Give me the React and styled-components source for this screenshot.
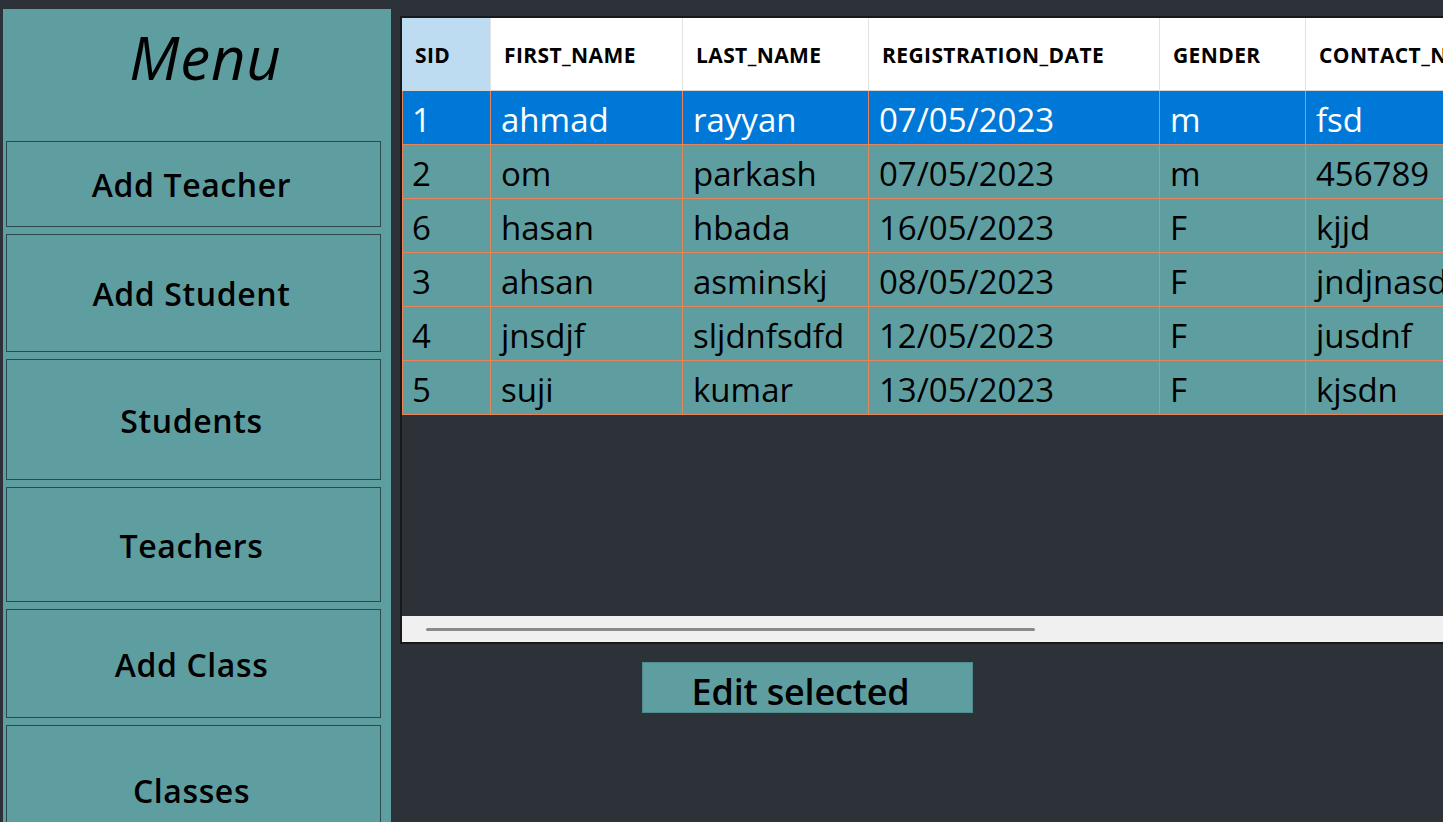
import React from "react";
import styled, { createGlobalStyle } from "styled-components";

const Global = createGlobalStyle`
  html, body { margin: 0; padding: 0; background: #2d3238; overflow: hidden; }
  * { box-sizing: border-box; }
`;

const Page = styled.div`
  display: flex;
  width: 1443px;
  height: 822px;
  background: #2d3238;
  font-family: "Open Sans", "Noto Sans", sans-serif;
  overflow: hidden;
`;

const Sidebar = styled.nav`
  flex: 0 0 388px;
  margin: 9px 0 0 3px;
  background: #5f9ea0;
  display: flex;
  flex-direction: column;
  padding: 0 10px 0 3px;
  overflow: hidden;
`;

const Title = styled.h1`
  margin: 0;
  height: 132px;
  flex-shrink: 0;
  display: flex;
  justify-content: center;
  padding-top: 18px;
  padding-left: 24px;
  font-family: "Open Sans", sans-serif;
  font-size: 60px;
  font-style: italic;
  font-weight: 400;
  letter-spacing: 0.8px;
  color: #000;
  line-height: 1;
`;

const MenuButton = styled.button`
  height: ${(p) => p.$h}px;
  margin-bottom: ${(p) => p.$gap}px;
  flex-shrink: 0;
  background: #5f9ea0;
  border: 1px solid #2c4a4b;
  font-family: "Open Sans", sans-serif;
  font-weight: 600;
  font-size: 32px;
  letter-spacing: 0.6px;
  color: #000;
  display: flex;
  align-items: center;
  justify-content: center;
  padding: 2px 4px 0 0;
  line-height: 1;
  cursor: pointer;
`;

const Main = styled.main`
  flex: 1;
  display: flex;
  flex-direction: column;
  padding: 16px 0 0 9px;
  min-width: 0;
`;

const Frame = styled.div`
  width: 1100px;
  height: 628px;
  border: 2px solid #17191b;
  border-right: none;
  display: flex;
  flex-direction: column;
  background: #2d3238;
`;

const Grid = styled.div`
  flex: 1;
  overflow: hidden;
`;

const Table = styled.table`
  border-collapse: separate;
  border-spacing: 0;
  table-layout: fixed;
  width: ${(p) => p.$w}px;
`;

const Th = styled.th`
  height: 73px;
  background: ${(p) => (p.$active ? "#bddcf2" : "#ffffff")};
  border-right: 1px solid #e2e2e2;
  border-bottom: 1px solid #d4d4d4;
  text-align: left;
  padding: 2px 0 0 13px;
  font-family: "Open Sans", sans-serif;
  font-weight: 700;
  font-size: 21px;
  letter-spacing: 0.4px;
  color: #000;
  white-space: nowrap;
  overflow: hidden;
`;

const Td = styled.td`
  height: 54px;
  border-right: 1px solid #e8845a;
  border-bottom: 1px solid #e8845a;
  border-left: ${(p) => (p.$first ? "1px solid #e8845a" : "none")};
  padding: 3px 0 0 ${(p) => p.$pl}px;
  font-family: "Open Sans", sans-serif;
  font-size: 33px;
  color: ${(p) => (p.$sel ? "#ffffff" : "#000")};
  background: ${(p) => (p.$sel ? "#0078d7" : "#5f9ea0")};
  white-space: nowrap;
  overflow: hidden;
  line-height: 1;
`;

const Scrollbar = styled.div`
  height: 26px;
  background: #f0f0f0;
  display: flex;
  align-items: center;
  padding-left: 24px;
`;

const Thumb = styled.div`
  width: 609px;
  height: 3px;
  border-radius: 2px;
  background: #8a8a8a;
`;

const EditButton = styled.button`
  align-self: flex-start;
  margin: 18px 0 0 242px;
  width: 331px;
  height: 51px;
  background: #5f9ea0;
  border: 1px solid #4f8c8e;
  font-family: "Open Sans", sans-serif;
  font-weight: 600;
  font-size: 36px;
  letter-spacing: -0.2px;
  color: #000;
  display: flex;
  align-items: flex-end;
  justify-content: center;
  padding: 0 14px 2px 0;
  line-height: 1;
  cursor: pointer;
`;

const menu = [
  { label: "Add Teacher", h: 86, gap: 7 },
  { label: "Add Student", h: 118, gap: 7 },
  { label: "Students", h: 121, gap: 7 },
  { label: "Teachers", h: 115, gap: 7 },
  { label: "Add Class", h: 109, gap: 7 },
  { label: "Classes", h: 130, gap: 0 },
];

const columns = [
  { key: "sid", label: "SID", w: 89 },
  { key: "first", label: "FIRST_NAME", w: 192 },
  { key: "last", label: "LAST_NAME", w: 186 },
  { key: "reg", label: "REGISTRATION_DATE", w: 291 },
  { key: "gender", label: "GENDER", w: 146 },
  { key: "contact", label: "CONTACT_NO", w: 200 },
];

const rows = [
  { sid: "1", first: "ahmad", last: "rayyan", reg: "07/05/2023", gender: "m", contact: "fsd" },
  { sid: "2", first: "om", last: "parkash", reg: "07/05/2023", gender: "m", contact: "456789" },
  { sid: "6", first: "hasan", last: "hbada", reg: "16/05/2023", gender: "F", contact: "kjjd" },
  { sid: "3", first: "ahsan", last: "asminskj", reg: "08/05/2023", gender: "F", contact: "jndjnasd" },
  { sid: "4", first: "jnsdjf", last: "sljdnfsdfd", reg: "12/05/2023", gender: "F", contact: "jusdnf" },
  { sid: "5", first: "suji", last: "kumar", reg: "13/05/2023", gender: "F", contact: "kjsdn" },
];

export default function App() {
  const totalW = columns.reduce((s, c) => s + c.w, 0);
  return (
    <Page>
      <Global />
      <Sidebar>
        <Title>Menu</Title>
        {menu.map((m) => (
          <MenuButton key={m.label} $h={m.h} $gap={m.gap}>
            {m.label}
          </MenuButton>
        ))}
      </Sidebar>
      <Main>
        <Frame>
          <Grid>
            <Table $w={totalW}>
              <colgroup>
                {columns.map((c) => (
                  <col key={c.key} style={{ width: c.w }} />
                ))}
              </colgroup>
              <thead>
                <tr>
                  {columns.map((c, i) => (
                    <Th key={c.key} $active={i === 0}>
                      {c.label}
                    </Th>
                  ))}
                </tr>
              </thead>
              <tbody>
                {rows.map((r, ri) => (
                  <tr key={r.sid}>
                    {columns.map((c, ci) => (
                      <Td key={c.key} $sel={ri === 0} $first={ci === 0} $pl={ci === 0 ? 9 : 10}>
                        {r[c.key]}
                      </Td>
                    ))}
                  </tr>
                ))}
              </tbody>
            </Table>
          </Grid>
          <Scrollbar>
            <Thumb />
          </Scrollbar>
        </Frame>
        <EditButton>Edit selected</EditButton>
      </Main>
    </Page>
  );
}
